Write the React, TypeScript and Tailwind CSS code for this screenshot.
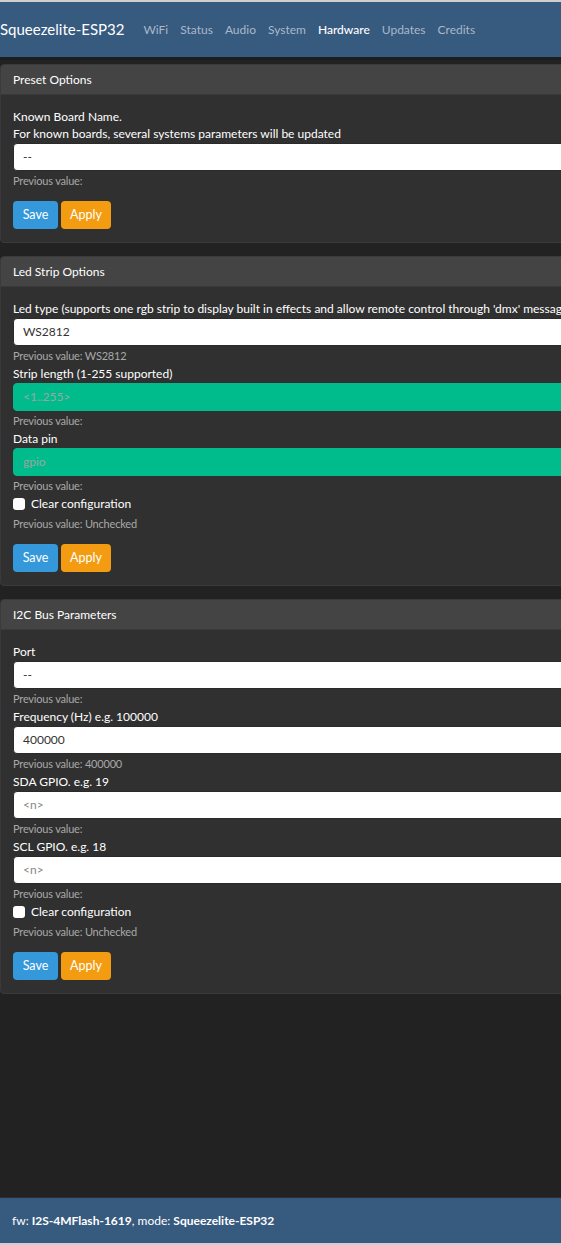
import React from "react";

const Prev = ({ children }: { children?: React.ReactNode }) => (
  <div className="mt-[2px] text-[11px] leading-[16px] text-[#a8a8a8] tracking-[-0.2px]">Previous value:{children ? <> {children}</> : null}</div>
);

const Field = ({
  label,
  value,
  placeholder,
  green,
  prev,
  first,
}: {
  label: React.ReactNode;
  value?: string;
  placeholder?: string;
  green?: boolean;
  prev?: string;
  first?: boolean;
}) => (
  <div className={first ? "" : "mt-[1px]"}>
    <div className="text-[12px] leading-[17px] text-white whitespace-nowrap">{label}</div>
    <div
      className={
        "mt-[1px] h-[28px] rounded-[4px] border flex items-center pl-[9px] text-[12px] " +
        (green ? "bg-[#00bc8c] border-[#00bc8c]" : "bg-white border-[#2a2a2a]")
      }
    >
      {value ? (
        <span className="text-[#333]">{value}</span>
      ) : (
        <span className={green ? "text-[#9aa6a0]" : "text-[#888]"}>{placeholder}</span>
      )}
    </div>
    <Prev>{prev}</Prev>
  </div>
);

const Check = () => (
  <>
    <div className="mt-[1px] h-[18px] flex items-center gap-[6px]">
      <span className="w-[12px] h-[12px] rounded-[3px] bg-white inline-block" />
      <span className="text-[12px] text-white">Clear configuration</span>
    </div>
    <div className="mt-[3px] text-[11px] leading-[16px] text-[#a8a8a8] tracking-[-0.2px]">Previous value: Unchecked</div>
  </>
);

const Buttons = () => (
  <div className="mt-[12px] flex gap-[3px]">
    <button className="h-[28px] w-[45px] rounded-[4px] bg-[#3498db] text-white text-[12.5px]">Save</button>
    <button className="h-[28px] w-[50px] rounded-[4px] bg-[#f39c12] text-white text-[12.5px]">Apply</button>
  </div>
);

const Card = ({ title, children }: { title: string; children: React.ReactNode }) => (
  <div className="w-[760px] rounded-[4px] border border-[#3a3a3a] bg-[#303030] overflow-hidden">
    <div className="h-[30px] bg-[#444] border-b border-[#3a3a3a] flex items-center pl-[12px] text-[12px] text-white">{title}</div>
    <div className="px-[12px] pt-[13px] pb-[13px]">{children}</div>
  </div>
);

export default function App() {
  return (
    <div className="w-[561px] h-[1245px] overflow-hidden bg-[#222] flex flex-col font-['Lato',sans-serif]">
      <div className="h-[2px] bg-[#cfcfcf] shrink-0" />
      <nav className="h-[55px] shrink-0 bg-[#375a7f] flex items-center">
        <span className="text-[15px] text-white mr-[13px]">Squeezelite-ESP32</span>
        {["WiFi", "Status", "Audio", "System", "Hardware", "Updates", "Credits"].map((l) => (
          <span
            key={l}
            className={"px-[6px] text-[12px] " + (l === "Hardware" ? "text-white font-medium" : "text-[#a9b8ca]")}
          >
            {l}
          </span>
        ))}
      </nav>
      <div className="flex-1 border-t-[3px] border-[#1d1d1d] pt-[4px] flex flex-col gap-[13px]">
        <Card title="Preset Options">
          <div className="text-[12px] leading-[17px] text-white">
            Known Board Name.
            <br />
            For known boards, several systems parameters will be updated
          </div>
          <div className="mt-[1px] h-[28px] rounded-[4px] border border-[#2a2a2a] bg-white flex items-center pl-[9px] text-[12px] text-[#333]">
            --
          </div>
          <Prev />
          <Buttons />
        </Card>
        <Card title="Led Strip Options">
          <Field
            first
            label="Led type (supports one rgb strip to display built in effects and allow remote control through 'dmx' messaging)"
            value="WS2812"
            prev="WS2812"
          />
          <Field label="Strip length (1-255 supported)" placeholder="<1..255>" green />
          <Field label="Data pin" placeholder="gpio" green />
          <Check />
          <Buttons />
        </Card>
        <Card title="I2C Bus Parameters">
          <Field first label="Port" value="--" />
          <Field label="Frequency (Hz) e.g. 100000" value="400000" prev="400000" />
          <Field label="SDA GPIO. e.g. 19" placeholder="<n>" />
          <Field label="SCL GPIO. e.g. 18" placeholder="<n>" />
          <Check />
          <Buttons />
        </Card>
      </div>
      <footer className="h-[46px] shrink-0 bg-[#375a7f] border-t border-[#2e2e2e] flex items-center pl-[12px] text-[12px] text-white">
        <span>
          fw: <b>I2S-4MFlash-1619</b>, mode: <b>Squeezelite-ESP32</b>
        </span>
      </footer>
      <div className="h-[2px] bg-[#cfcfcf] shrink-0" />
    </div>
  );
}
